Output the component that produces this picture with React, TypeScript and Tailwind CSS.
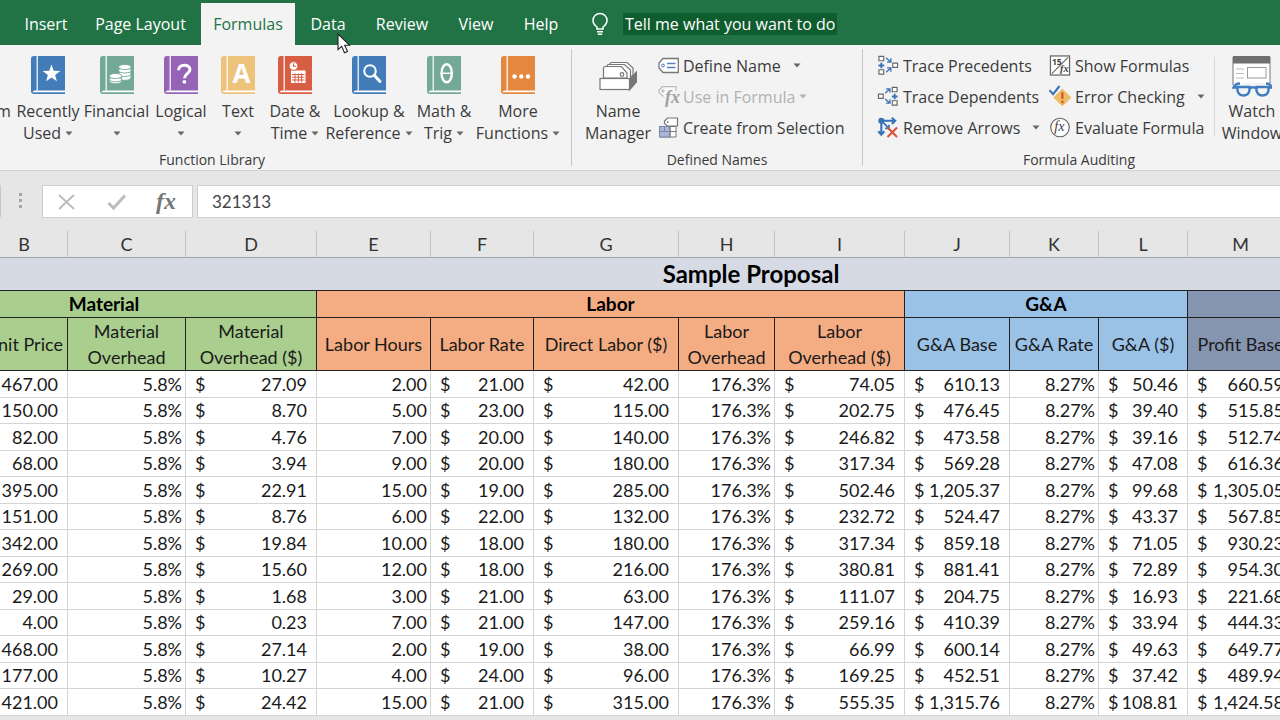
import type { ReactNode } from 'react';
import { clsx } from 'clsx';

const tabs = [
  { label: 'Insert', width: 'w-[68px]' },
  { label: 'Page Layout', width: 'w-[121px]' },
  { label: 'Formulas', width: 'w-[94px]' },
  { label: 'Data', width: 'w-[66px]' },
  { label: 'Review', width: 'w-[82px]' },
  { label: 'View', width: 'w-[66px]' },
  { label: 'Help', width: 'w-[64px]' },
];

const columns = [
  { letter: 'A', width: 'w-[89px]' },
  { letter: 'B', width: 'w-[87px]' },
  { letter: 'C', width: 'w-[118px]' },
  { letter: 'D', width: 'w-[131px]' },
  { letter: 'E', width: 'w-[114px]' },
  { letter: 'F', width: 'w-[103px]' },
  { letter: 'G', width: 'w-[145px]' },
  { letter: 'H', width: 'w-[96px]' },
  { letter: 'I', width: 'w-[130px]' },
  { letter: 'J', width: 'w-[105px]' },
  { letter: 'K', width: 'w-[89px]' },
  { letter: 'L', width: 'w-[89px]' },
  { letter: 'M', width: 'w-[106px]' },
  { letter: '', width: 'w-[316px]' },
];

const GREEN = 'bg-[#a9ce8e]';
const ORANGE = 'bg-[#f4ac83]';
const BLUE = 'bg-[#9ac1e6]';
const SLATE = 'bg-[#8594af]';

const headings = [
  { text: '', color: GREEN },
  { text: 'Unit Price', color: GREEN },
  { text: 'Material Overhead', color: GREEN },
  { text: 'Material Overhead ($)', color: GREEN },
  { text: 'Labor Hours', color: ORANGE },
  { text: 'Labor Rate', color: ORANGE },
  { text: 'Direct Labor ($)', color: ORANGE },
  { text: 'Labor Overhead', color: ORANGE },
  { text: 'Labor Overhead ($)', color: ORANGE },
  { text: 'G&A Base', color: BLUE },
  { text: 'G&A Rate', color: BLUE },
  { text: 'G&A ($)', color: BLUE },
  { text: 'Profit Base', color: SLATE },
  { text: '', color: SLATE },
];

// B, D, E, F, G, I, J, L, M (overhead and G&A rates are the same on every row)
const rows = [
  ['467.00', '27.09', '2.00', '21.00', '42.00', '74.05', '610.13', '50.46', '660.59'],
  ['150.00', '8.70', '5.00', '23.00', '115.00', '202.75', '476.45', '39.40', '515.85'],
  ['82.00', '4.76', '7.00', '20.00', '140.00', '246.82', '473.58', '39.16', '512.74'],
  ['68.00', '3.94', '9.00', '20.00', '180.00', '317.34', '569.28', '47.08', '616.36'],
  ['395.00', '22.91', '15.00', '19.00', '285.00', '502.46', '1,205.37', '99.68', '1,305.05'],
  ['151.00', '8.76', '6.00', '22.00', '132.00', '232.72', '524.47', '43.37', '567.85'],
  ['342.00', '19.84', '10.00', '18.00', '180.00', '317.34', '859.18', '71.05', '930.23'],
  ['269.00', '15.60', '12.00', '18.00', '216.00', '380.81', '881.41', '72.89', '954.30'],
  ['29.00', '1.68', '3.00', '21.00', '63.00', '111.07', '204.75', '16.93', '221.68'],
  ['4.00', '0.23', '7.00', '21.00', '147.00', '259.16', '410.39', '33.94', '444.33'],
  ['468.00', '27.14', '2.00', '19.00', '38.00', '66.99', '600.14', '49.63', '649.77'],
  ['177.00', '10.27', '4.00', '24.00', '96.00', '169.25', '452.51', '37.42', '489.94'],
  ['421.00', '24.42', '15.00', '21.00', '315.00', '555.35', '1,315.76', '108.81', '1,424.58'],
];

const Caret = ({ className }: { className?: string }) => (
  <svg viewBox="0 0 8 5" className={clsx('inline-block h-[5px] w-2 shrink-0', className)} fill="currentColor">
    <path d="M0.5 0.5h7L4 4.5z" />
  </svg>
);

const Book = ({ color, children }: { color: string; children: ReactNode }) => (
  <svg viewBox="0 0 34 38" className="h-[38px] w-[34px]">
    <path d="M3 0H34V38H3Q0 38 0 35V3Q0 0 3 0Z" fill={color} />
    <path d="M6.2 0V34.5" stroke="#fff" strokeWidth="1.2" />
    <path d="M34 34.6H4Q1.6 34.8 1.6 36.2H34Z" fill="#fff" />
    {children}
  </svg>
);

const StarIcon = () => (
  <Book color="#437db9">
    <path d="M20.5 8.500l2.200 6.200 6.600.2-5.200 4 1.800 6.400-5.400-3.800-5.400 3.800 1.800-6.400-5.200-4 6.600-.2z" fill="#fff" />
  </Book>
);

const CoinsIcon = () => (
  <Book color="#73a996">
    <g fill="#fff" stroke="#73a996" strokeWidth="0.9">
      <path d="M18.500 18v3.500c0 1.800 2.800 2.800 6.200 2.800s6.200-1 6.200-2.800V11" />
      <ellipse cx="24.8" cy="18" rx="6.3" ry="2.5" />
      <ellipse cx="24.8" cy="14.5" rx="6.3" ry="2.5" />
      <ellipse cx="24.8" cy="11" rx="6.3" ry="2.6" />
      <path d="M9.300 20v5c0 1.600 2.800 2.800 6.200 2.800s6.200-1.200 6.200-2.800v-5z" />
      <ellipse cx="15.5" cy="23.5" rx="6.2" ry="2.3" />
      <ellipse cx="15.5" cy="20" rx="6.2" ry="2.6" />
    </g>
  </Book>
);

const QuestionIcon = () => (
  <Book color="#9564b6">
    <path d="M14.500 14.200c0-6.500 11.500-6.500 11.500-.6 0 4-5.500 4.200-5.500 8.600" fill="none" stroke="#fff" strokeWidth="3" />
    <circle cx="20.4" cy="25.8" r="1.9" fill="#fff" />
  </Book>
);

const TextIcon = () => (
  <Book color="#edc27b">
    <text x="20.5" y="27" textAnchor="middle" fill="#fff" className="font-['Open_Sans',sans-serif] text-[26px] font-bold">
      A
    </text>
  </Book>
);

const CalendarIcon = () => (
  <Book color="#d75d43">
    <rect x="13" y="14.5" width="14.5" height="12.5" fill="#fff" />
    <path
      d="M14 18.500H26.500M14 21.200H26.500M14 24H26.500M17 17.500V26.500M20.300 17.500V26.500M23.600 17.500V26.500"
      stroke="#d75d43"
      strokeWidth="1"
    />
    <circle cx="15.5" cy="10" r="4.3" fill="#fff" stroke="#d75d43" strokeWidth="0.8" />
    <path d="M15.500 7.200V10.200H18" fill="none" stroke="#d75d43" strokeWidth="1.1" />
  </Book>
);

const LookupIcon = () => (
  <Book color="#437db9">
    <circle cx="18" cy="15" r="5.8" fill="none" stroke="#fff" strokeWidth="2" />
    <path d="M22.200 19.300L28 25.500" stroke="#fff" strokeWidth="3" strokeLinecap="round" />
  </Book>
);

const ThetaIcon = () => (
  <Book color="#73a996">
    <ellipse cx="19.7" cy="17.3" rx="5.2" ry="9" fill="none" stroke="#fff" strokeWidth="2.4" />
    <path d="M15 17.300H24.500" stroke="#fff" strokeWidth="1.5" />
  </Book>
);

const MoreIcon = () => (
  <Book color="#e4873f">
    <g fill="#fff">
      <circle cx="13.5" cy="20.5" r="2.2" />
      <circle cx="20.3" cy="20.5" r="2.2" />
      <circle cx="27" cy="20.5" r="2.2" />
    </g>
  </Book>
);

const NameManagerIcon = () => (
  <svg viewBox="0 0 38 38" className="h-[38px] w-[38px]" fill="#fff" stroke="#777" strokeWidth="1.2">
    <path d="M11 12V8.500Q11 6.500 13 6.500H28L34 12V20H11Z" />
    <path d="M8 14V10.500Q8 8.500 10 8.500H25.500L31.500 14V24H8Z" />
    <path d="M4.500 22V12.500Q4.500 10.500 6.500 10.500H22.500L28 17V22Z" />
    <circle cx="23" cy="18.5" r="1.8" />
    <path d="M30.500 23.500L37.500 16V26L30.500 34Z" fill="#777" />
    <rect x="1" y="22.5" width="29.5" height="11" />
  </svg>
);

const DefineNameIcon = () => (
  <svg viewBox="0 0 21 21" className="h-[21px] w-[21px]" fill="none">
    <path d="M5 3.500H20.300V17.500H5L1 13V8Z" fill="#fff" stroke="#777" strokeWidth="1.3" />
    <circle cx="5" cy="10.5" r="1.4" stroke="#4d6fb3" />
    <path d="M9 8.500H17.500M9 12.500H17.500" stroke="#5b7bc0" strokeWidth="1.3" />
  </svg>
);

const UseInFormulaIcon = () => (
  <svg viewBox="0 0 21 21" className="h-[21px] w-[21px] overflow-visible">
    <path d="M5.500 10.500L1 6.500V4L4.500 .7H18V5" fill="#fafafa" stroke="#bbb" strokeWidth="1.2" />
    <circle cx="5" cy="5" r="1.1" fill="none" stroke="#aaa" />
    <text x="7" y="17" fill="#a0a0a0" className="font-['Liberation_Serif',serif] text-[18px] font-bold italic">
      fx
    </text>
  </svg>
);

const CreateIcon = () => (
  <svg viewBox="0 0 21 21" className="h-[21px] w-[21px]">
    <path d="M1.500 9.500H18V20H1.500Z" fill="#fff" stroke="#777" />
    <path d="M1.500 9.500H6.500V14.500H1.500ZM1.500 14.500H12V20H1.500ZM6.500 9.500H12V14.500H6.500Z" fill="#a9b5d4" stroke="#7c86a5" />
    <path d="M12 14.500H18M12 9.500V20" stroke="#777" />
    <path d="M9.500 1H19.500V9H9.500L6.500 6.500V4Z" fill="#fff" stroke="#777" strokeWidth="1.2" />
    <circle cx="9.7" cy="5" r="0.9" fill="#777" />
  </svg>
);

const PrecedentsIcon = () => (
  <svg viewBox="0 0 22 22" className="h-[21px] w-[22px]" fill="none">
    <g stroke="#666" strokeWidth="1.2" fill="#fff">
      <path d="M1.500 1.500H6.500V6H1.500ZM1.500 15.500H6.500V20H1.500ZM16 8.500H21V13H16Z" />
    </g>
    <path d="M4 8V14M1 11H7" stroke="#3a73b8" strokeWidth="2" />
    <path d="M9 3L14 7.500M9 18L14 13.500M10 7.500H14V3.500M10 13.500H14V17.500" stroke="#3a73b8" strokeWidth="1.4" />
  </svg>
);

const DependentsIcon = () => (
  <svg viewBox="0 0 22 22" className="h-[21px] w-[22px]" fill="none">
    <g stroke="#666" strokeWidth="1.2" fill="#fff">
      <path d="M15.500 1.500H20.500V6H15.500ZM15.500 15.500H20.500V20H15.500ZM1 8.500H6V13H1Z" />
    </g>
    <path d="M18 8V14M15 11H21" stroke="#3a73b8" strokeWidth="2" />
    <path d="M8 7.500L13 3M8 13.500L13 18M9 3H13V7M9 18H13V14" stroke="#3a73b8" strokeWidth="1.4" />
  </svg>
);

const RemoveArrowsIcon = () => (
  <svg viewBox="0 0 22 22" className="h-[21px] w-[22px]" fill="none">
    <circle cx="4" cy="4" r="3.2" fill="#3a73b8" />
    <path d="M4 4H18M15 .8L18.500 4L15 7.200M4 4V18M.8 15L4 18.500L7.200 15" stroke="#3a73b8" strokeWidth="2.2" />
    <path d="M6 6L12 12M8 12H12V8" stroke="#3a73b8" strokeWidth="1.8" />
    <path d="M10.500 11L20.500 21M20.500 11L10.500 21" stroke="#d9533a" strokeWidth="2.2" />
  </svg>
);

const ShowFormulasIcon = () => (
  <svg viewBox="0 0 22 22" className="h-[21px] w-[22px]">
    <rect x="1" y="1" width="20" height="20" fill="#fff" stroke="#666" strokeWidth="1.3" />
    <path d="M2.500 19.500L19.500 2.500" stroke="#666" strokeWidth="1.2" />
    <text x="2.5" y="10" fill="#444" className="font-['Open_Sans',sans-serif] text-[9px] font-bold">
      15
    </text>
    <text x="11" y="18" fill="#444" className="font-['Liberation_Serif',serif] text-[11px] font-bold italic">
      fx
    </text>
  </svg>
);

const ErrorCheckingIcon = () => (
  <svg viewBox="0 0 22 22" className="h-[21px] w-[22px] overflow-visible">
    <path d="M13.500 4L21.500 12L13.500 20L5.500 12Z" fill="#efbc66" stroke="#efbc66" strokeWidth="2" strokeLinejoin="round" />
    <path d="M13.500 6.500V13.500M13.500 15.500V18" stroke="#d0502b" strokeWidth="2.2" />
    <path d="M0 4.500L3.800 8.500L10.500 0" fill="none" stroke="#3a73b8" strokeWidth="2.2" />
  </svg>
);

const EvaluateIcon = () => (
  <svg viewBox="0 0 22 22" className="h-[21px] w-[22px]">
    <circle cx="11" cy="11" r="9.7" fill="#fff" stroke="#666" strokeWidth="1.2" />
    <text x="10.5" y="15" textAnchor="middle" fill="#444" className="font-['Liberation_Serif',serif] text-[15px] italic">
      fx
    </text>
  </svg>
);

const WatchIcon = () => (
  <svg viewBox="0 0 40 42" className="h-[42px] w-10">
    <path d="M1.500 1V29H8L12 27H38V1Z" fill="#fff" />
    <path d="M1 29V1H38V27" fill="none" stroke="#777" />
    <path d="M1 0H38V7.500H1Z" fill="#6f6f6f" />
    <path d="M4 13H12M4 17.500H12M4 22H12" stroke="#bbb" />
    <rect x="15.5" y="11.5" width="18.5" height="10.5" fill="#fff" stroke="#999" />
    <g fill="#f3f3f3" stroke="#3f7cc0" strokeWidth="2.4">
      <path d="M5.500 31H17.500V34.500Q16.500 39.500 11.500 39.500T5.500 34.500Z" />
      <path d="M24.500 31H36.500V34.500Q35.500 39.500 30.500 39.500T24.500 34.500Z" />
      <path d="M17.500 32.500Q21 30 24.500 32.500M5.500 31.500H1.500Q3 27.500 8 27.500M36.500 31.500H39.500Q38.500 27.500 34 27.500" fill="none" />
    </g>
  </svg>
);

interface BigButtonProps {
  icon?: ReactNode;
  top: string;
  bottom?: string;
  caret?: boolean;
  width: string;
}

const BigButton = ({ icon, top, bottom, caret, width }: BigButtonProps) => (
  <button type="button" className={clsx('flex shrink-0 flex-col items-center whitespace-nowrap leading-[22px]', width)}>
    <span className="flex h-11 items-start">{icon}</span>
    <span>{top}</span>
    <span className="flex h-[22px] items-center gap-1">
      {bottom}
      {caret && <Caret className="text-[#666]" />}
    </span>
  </button>
);

interface SmallButtonProps {
  icon: ReactNode;
  label: string;
  caret?: boolean;
  disabled?: boolean;
}

const SmallButton = ({ icon, label, caret, disabled }: SmallButtonProps) => (
  <button
    type="button"
    disabled={disabled}
    className={clsx('flex h-[31px] items-center whitespace-nowrap', disabled && 'text-[#b1b1b1]')}
  >
    {icon}
    <span className="ml-1">{label}</span>
    {caret && <Caret className={disabled ? 'ml-1 text-[#b1b1b1]' : 'ml-3 text-[#666]'} />}
  </button>
);

const GroupLabel = ({ children }: { children: ReactNode }) => (
  <div className="mt-1.5 text-center text-sm leading-5">{children}</div>
);

const Divider = () => <div className="my-1 w-px shrink-0 bg-[#c6c6c6]" />;

const TabBar = () => (
  <nav className="flex h-[45px] items-end bg-[#217346] pl-3 text-white">
    {tabs.map((tab) => (
      <button
        key={tab.label}
        type="button"
        className={clsx(
          'relative h-[42px] shrink-0 whitespace-nowrap text-center',
          tab.width,
          tab.label === 'Formulas' && 'bg-[#f3f3f3] text-[#217346]',
        )}
      >
        {tab.label}
        {tab.label === 'Data' && (
          <svg viewBox="0 0 14 21" className="absolute top-[30px] left-[42px] z-10 h-[21px] w-3.5">
            <path
              d="M1 1V16.500L4.700 13.300L7.500 19.800L10.500 18.500L7.700 12.200H12.500Z"
              fill="#fff"
              stroke="#222"
              strokeWidth="1.1"
            />
          </svg>
        )}
      </button>
    ))}
    <label className="ml-[18px] flex h-[42px] items-center gap-3.5">
      <svg viewBox="0 0 18 24" className="h-6 w-[18px]" fill="none" stroke="#fff" strokeWidth="1.5">
        <path d="M6 17V15Q2 12 2 8.500A7 7 0 0 1 16 8.500Q16 12 12 15V17Z" />
        <path d="M6 19.700H12M6.800 22.300H11.200" />
      </svg>
      <input
        aria-label="Tell me what you want to do"
        placeholder="Tell me what you want to do"
        className="h-[22px] w-[214px] bg-[#0f5c2f] px-0.5 placeholder:text-white focus:outline-none"
      />
    </label>
  </nav>
);

const Ribbon = () => (
  <div className="flex overflow-hidden border-b border-[#d2d2d2] bg-[#f3f3f3] text-[#3b3b3b]">
    <section className="-ml-[147px] w-[718px] shrink-0 pt-[11px]">
      <div className="flex justify-end pr-2.5">
        <BigButton top="AutoSum" width="w-[75px]" />
        <BigButton icon={<StarIcon />} top="Recently" bottom="Used" caret width="w-[68px]" />
        <BigButton icon={<CoinsIcon />} top="Financial" caret width="w-[69px]" />
        <BigButton icon={<QuestionIcon />} top="Logical" caret width="w-[60px]" />
        <BigButton icon={<TextIcon />} top="Text" caret width="w-[54px]" />
        <BigButton icon={<CalendarIcon />} top="Date &" bottom="Time" caret width="w-[60px]" />
        <BigButton icon={<LookupIcon />} top="Lookup &" bottom="Reference" caret width="w-[88px]" />
        <BigButton icon={<ThetaIcon />} top="Math &" bottom="Trig" caret width="w-[62px]" />
        <BigButton icon={<MoreIcon />} top="More" bottom="Functions" caret width="w-[86px]" />
      </div>
      <GroupLabel>Function Library</GroupLabel>
    </section>
    <Divider />
    <section className="w-[290px] shrink-0">
      <div className="flex pl-3">
        <div className="pt-[11px]">
          <BigButton icon={<NameManagerIcon />} top="Name" bottom="Manager" width="w-[68px]" />
        </div>
        <div className="ml-1.5 pt-[5px]">
          <SmallButton icon={<DefineNameIcon />} label="Define Name" caret />
          <SmallButton icon={<UseInFormulaIcon />} label="Use in Formula" caret disabled />
          <SmallButton icon={<CreateIcon />} label="Create from Selection" />
        </div>
      </div>
      <GroupLabel>Defined Names</GroupLabel>
    </section>
    <Divider />
    <section className="w-[432px] shrink-0">
      <div className="flex pl-3.5">
        <div className="w-[172px] pt-[5px]">
          <SmallButton icon={<PrecedentsIcon />} label="Trace Precedents" />
          <SmallButton icon={<DependentsIcon />} label="Trace Dependents" />
          <SmallButton icon={<RemoveArrowsIcon />} label="Remove Arrows" caret />
        </div>
        <div className="w-[165px] pt-[5px]">
          <SmallButton icon={<ShowFormulasIcon />} label="Show Formulas" />
          <SmallButton icon={<ErrorCheckingIcon />} label="Error Checking" caret />
          <SmallButton icon={<EvaluateIcon />} label="Evaluate Formula" />
        </div>
        <div className="mt-3 mb-2 w-px bg-[#d8d8d8]" />
        <div className="pt-[11px] pl-[3px]">
          <BigButton icon={<WatchIcon />} top="Watch" bottom="Window" width="w-[68px]" />
        </div>
      </div>
      <GroupLabel>Formula Auditing</GroupLabel>
    </section>
  </div>
);

const FormulaBar = () => (
  <div className="flex h-[60px] items-start bg-[#e6e6e6] pt-3.5">
    <div className="h-8 w-px bg-[#c8c8c8]" />
    <svg viewBox="0 0 4 16" className="mt-2 ml-[18px] h-4 w-1" fill="#a6a6a6">
      <path d="M0 0H3V3H0ZM0 6H3V9H0ZM0 12H3V15H0Z" />
    </svg>
    <div className="ml-[19px] flex h-[33px] w-[151px] shrink-0 items-center justify-between border border-[#cdcdcd] bg-white pr-4 pl-3.5">
      <button type="button" aria-label="Cancel">
        <svg viewBox="0 0 20 18" className="h-[18px] w-5" fill="none" stroke="#bdbdbd" strokeWidth="2">
          <path d="M2 2L17 16M17 2L2 16" />
        </svg>
      </button>
      <button type="button" aria-label="Enter">
        <svg viewBox="0 0 20 18" className="h-[18px] w-5" fill="none" stroke="#bdbdbd" strokeWidth="3">
          <path d="M1.500 10L6.500 15L18 2.500" />
        </svg>
      </button>
      <button
        type="button"
        className="pb-0.5 font-['Liberation_Serif',serif] text-2xl leading-6 font-bold text-[#777] italic"
      >
        fx
      </button>
    </div>
    <input
      aria-label="Formula bar"
      defaultValue="321313"
      className="ml-1 h-[33px] min-w-0 flex-1 border border-r-0 border-[#cdcdcd] bg-white px-3.5 font-[Lato,sans-serif] text-[17px] text-[#444] focus:outline-none"
    />
  </div>
);

const Plain = ({ value }: { value: string }) => (
  <td className="border-r border-b border-[#d4d4d4] pr-[3px] text-right">{value}</td>
);

const Money = ({ value }: { value: string }) => (
  <td className="border-r border-b border-[#d4d4d4] pr-[9px] pl-[9px]">
    <div className="flex justify-between">
      <span>$</span>
      <span>{value}</span>
    </div>
  </td>
);

const Sheet = () => (
  <div className="overflow-hidden bg-white">
    <table className="-ml-[108px] w-[1718px] table-fixed border-separate border-spacing-0 font-[Lato,sans-serif] text-lg leading-[26px] text-[#1a1a1a]">
      <colgroup>
        {columns.map((column, index) => (
          <col key={index} className={column.width} />
        ))}
      </colgroup>
      <thead>
        <tr className="h-[27px] bg-[#e6e6e6] text-[#333]">
          {columns.map((column, index) => (
            <th key={index} className="border-r border-b border-r-[#c3c3c3] border-b-[#9ea3ad] p-0 font-normal">
              {column.letter}
            </th>
          ))}
        </tr>
        <tr className="h-[33px]">
          <th colSpan={14} className="border-b border-[#222] bg-[#d6dae5] p-0 text-2xl leading-8 text-black">
            Sample Proposal
          </th>
        </tr>
        <tr className="h-[27px] text-[19px] text-black">
          <th colSpan={4} className={clsx('border-r border-b border-[#222] p-0', GREEN)}>
            Material
          </th>
          <th colSpan={5} className={clsx('border-r border-b border-[#222] p-0', ORANGE)}>
            Labor
          </th>
          <th colSpan={3} className={clsx('border-r border-b border-[#222] p-0', BLUE)}>
            G&amp;A
          </th>
          <th colSpan={2} className={clsx('border-b border-[#222] p-0', SLATE)} />
        </tr>
        <tr className="h-[53px]">
          {headings.map((heading, index) => (
            <th key={index} className={clsx('border-r border-b border-[#222] px-0.5 py-0 font-normal', heading.color)}>
              {heading.text}
            </th>
          ))}
        </tr>
      </thead>
      <tbody>
        {rows.map(([price, material, hours, rate, direct, overhead, base, ga, profit], index) => (
          <tr key={index} className="h-[27px] *:py-0 *:leading-[25px] even:h-[26px]">
            <Plain value="" />
            <Money value={price} />
            <Plain value="5.8%" />
            <Money value={material} />
            <Plain value={hours} />
            <Money value={rate} />
            <Money value={direct} />
            <Plain value="176.3%" />
            <Money value={overhead} />
            <Money value={base} />
            <Plain value="8.27%" />
            <Money value={ga} />
            <Money value={profit} />
            <Plain value="" />
          </tr>
        ))}
      </tbody>
    </table>
  </div>
);

export default function App() {
  return (
    <div className="h-screen overflow-hidden bg-[#e6e6e6] font-['Open_Sans',sans-serif] text-base">
      <TabBar />
      <Ribbon />
      <FormulaBar />
      <Sheet />
    </div>
  );
}
